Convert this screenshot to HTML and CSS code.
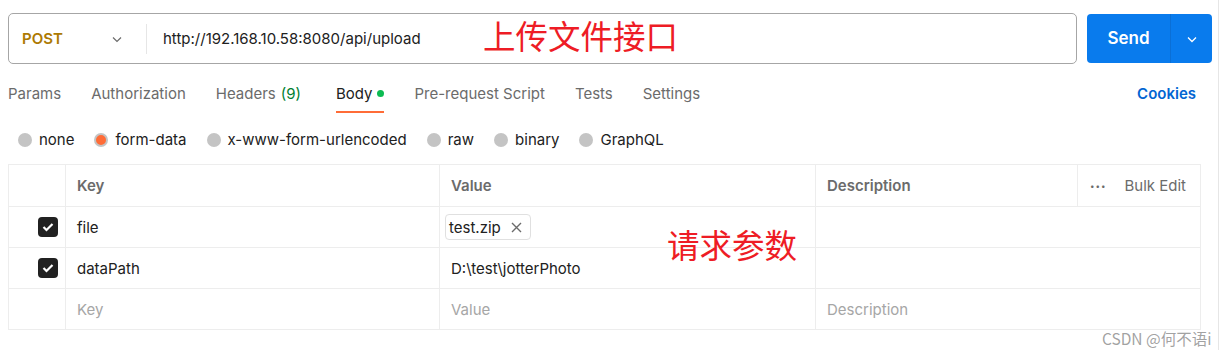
FILE: index.html
```html
<!DOCTYPE html>
<html lang="en">
<head>
<meta charset="UTF-8">
<meta name="viewport" content="width=device-width, initial-scale=1.0">
<title>Upload Request</title>
<link rel="stylesheet" href="styles.css">
</head>
<body>
<div class="panel">

  <!-- request line -->
  <div class="request-bar">
    <div class="url-box">
      <div class="method">
        <span class="method-name">POST</span>
        <svg class="chevron" width="12" height="12" viewBox="0 0 12 12"><path d="M2 4.5 L6 8.5 L10 4.5" fill="none" stroke="#6b6b6b" stroke-width="1.2"/></svg>
      </div>
      <div class="url-text">http://192.168.10.58:8080/api/upload</div>
      <span class="note note-url">上传文件接口</span>
    </div>
    <div class="send">
      <span class="send-label">Send</span>
      <span class="send-more">
        <svg width="12" height="12" viewBox="0 0 12 12"><path d="M2 4.5 L6 8.5 L10 4.5" fill="none" stroke="#fff" stroke-width="1.3"/></svg>
      </span>
    </div>
  </div>

  <!-- tabs -->
  <div class="tabs">
    <div class="tab-list">
      <span class="tab">Params</span>
      <span class="tab">Authorization</span>
      <span class="tab headers">Headers <span class="count">(9)</span></span>
      <span class="tab active">Body <span class="dot"></span></span>
      <span class="tab">Pre-request Script</span>
      <span class="tab">Tests</span>
      <span class="tab">Settings</span>
    </div>
    <span class="cookies">Cookies</span>
  </div>

  <!-- body type -->
  <div class="body-types">
    <label class="type"><span class="radio"></span>none</label>
    <label class="type"><span class="radio on"></span>form-data</label>
    <label class="type"><span class="radio"></span>x-www-form-urlencoded</label>
    <label class="type"><span class="radio"></span>raw</label>
    <label class="type"><span class="radio"></span>binary</label>
    <label class="type"><span class="radio"></span>GraphQL</label>
  </div>

  <!-- form data -->
  <div class="table-wrap">
    <table class="params">
      <tr>
        <th class="col-check"></th>
        <th class="col-key">Key</th>
        <th class="col-value">Value</th>
        <th class="col-desc">Description</th>
        <th class="col-bulk"><span class="more">&bull;&bull;&bull;</span>Bulk Edit</th>
      </tr>
      <tr>
        <td class="col-check"><span class="check"><svg width="12" height="10" viewBox="0 0 12 10"><path d="M1.5 5 L4.5 8 L10.5 2" fill="none" stroke="#fff" stroke-width="2.2"/></svg></span></td>
        <td>file</td>
        <td><span class="chip">test.zip <svg width="11" height="11" viewBox="0 0 11 11"><path d="M1 1 L10 10 M10 1 L1 10" stroke="#6b6b6b" stroke-width="1.4"/></svg></span></td>
        <td colspan="2"></td>
      </tr>
      <tr>
        <td class="col-check"><span class="check"><svg width="12" height="10" viewBox="0 0 12 10"><path d="M1.5 5 L4.5 8 L10.5 2" fill="none" stroke="#fff" stroke-width="2.2"/></svg></span></td>
        <td>dataPath</td>
        <td>D:\test\jotterPhoto</td>
        <td colspan="2"></td>
      </tr>
      <tr>
        <td class="col-check"></td>
        <td class="placeholder">Key</td>
        <td class="placeholder">Value</td>
        <td colspan="2" class="placeholder">Description</td>
      </tr>
    </table>
    <span class="note note-params">请求参数</span>
  </div>

  <span class="watermark">CSDN @何不语i</span>
</div>
</body>
</html>
```

FILE: styles.css
```css
body {
  margin: 0;
  font-family: Inter, "Noto Sans", sans-serif;
  font-size: 15px;
  color: #212121;
  background-color: #fff;
}

.panel {
  position: relative;
  width: 1219px;
  height: 350px;
  border-right: 1px solid #e6e6e6;
  box-sizing: border-box;
  padding: 13px 0 0 8px;
}

/* request line */
.request-bar {
  display: flex;
  align-items: center;
  gap: 10px;
}

.url-box {
  position: relative;
  display: flex;
  align-items: center;
  width: 1069px;
  height: 51px;
  box-sizing: border-box;
  border: 1px solid #a6a6a6;
  border-radius: 5px;
}

.method {
  display: flex;
  align-items: center;
  justify-content: space-between;
  width: 138px;
  height: 30px;
  box-sizing: border-box;
  padding: 0 23px 0 13px;
  border-right: 1px solid #e6e6e6;
}

.method-name {
  color: #ad7a03;
  font-weight: 600;
}

.url-text {
  padding-left: 16px;
}

.note {
  position: absolute;
  color: #ee1c25;
  font-family: "Noto Sans CJK SC", sans-serif;
  font-size: 32.5px;
  line-height: 1;
}

.note-url {
  left: 474px;
  top: 5px;
}

.send {
  display: flex;
  align-items: center;
  width: 125px;
  height: 49px;
  background-color: #097bed;
  border-radius: 4px;
  color: #fff;
}

.send-label {
  width: 83px;
  text-align: center;
  font-weight: 600;
  font-size: 17px;
  border-right: 1px solid #0a6fd6;
  line-height: 49px;
}

.send-more {
  flex: 1;
  display: flex;
  justify-content: center;
}

/* tabs */
.tabs {
  display: flex;
  justify-content: space-between;
  align-items: center;
  height: 49px;
  padding-right: 22px;
}

.tab-list {
  display: flex;
  gap: 30px;
  height: 100%;
}

.tab {
  display: flex;
  align-items: center;
  gap: 5px;
  color: #6b6b6b;
  padding-top: 12px;
  box-sizing: border-box;
  border-bottom: 2px solid transparent;
}

.tab.headers {
  margin-right: 5px;
}

.tab.active {
  color: #212121;
  border-bottom-color: #ff6c37;
}

.count {
  color: #007f31;
}

.dot {
  width: 7px;
  height: 7px;
  border-radius: 50%;
  background-color: #0cbb52;
}

.cookies {
  color: #0265d2;
  font-weight: 600;
  padding-top: 10px;
}

/* body types */
.body-types {
  display: flex;
  align-items: center;
  gap: 20px;
  height: 51px;
  padding: 2px 0 0 10px;
  box-sizing: border-box;
}

.type {
  display: flex;
  align-items: center;
  gap: 7px;
  color: #212121;
}

.radio {
  width: 14px;
  height: 14px;
  border-radius: 50%;
  background-color: #c4c4c4;
  box-sizing: border-box;
}

.radio.on {
  background-color: #ff6c37;
  border: 2px solid #c4c4c4;
}

/* params table */
.table-wrap {
  position: relative;
  width: 1193px;
}

.params {
  width: 100%;
  border-collapse: collapse;
  table-layout: fixed;
}

.params th,
.params td {
  height: 41px;
  padding: 0 11px;
  border: 1px solid #ededed;
  text-align: left;
  box-sizing: border-box;
}

.params th {
  height: 42px;
  color: #6b6b6b;
  font-weight: 600;
}

.col-check { width: 57px; }
.col-key { width: 374px; }
.col-value { width: 376px; }
.col-desc { width: 262px; }

.params .col-check {
  text-align: right;
  padding: 0 7px 0 0;
}

.params .col-bulk {
  font-weight: 400;
  padding-left: 12px;
}

.more {
  font-size: 8px;
  letter-spacing: 1px;
  margin-right: 18px;
  vertical-align: 2px;
}

.check {
  display: inline-flex;
  align-items: center;
  justify-content: center;
  width: 20px;
  height: 20px;
  background-color: #212121;
  border-radius: 4px;
  vertical-align: middle;
}

.chip {
  display: inline-flex;
  align-items: center;
  gap: 10px;
  height: 24px;
  padding: 0 8px 0 3px;
  margin-left: -6px;
  border: 1px solid #e0e0e0;
  border-radius: 4px;
}

.placeholder {
  color: #a6a6a6;
}

.note-params {
  left: 659px;
  top: 64px;
}

.watermark {
  position: absolute;
  left: 1102px;
  top: 331px;
  font-family: "Noto Sans CJK SC", sans-serif;
  font-size: 15.5px;
  line-height: 1;
  color: rgba(120, 120, 120, 0.7);
}
```
